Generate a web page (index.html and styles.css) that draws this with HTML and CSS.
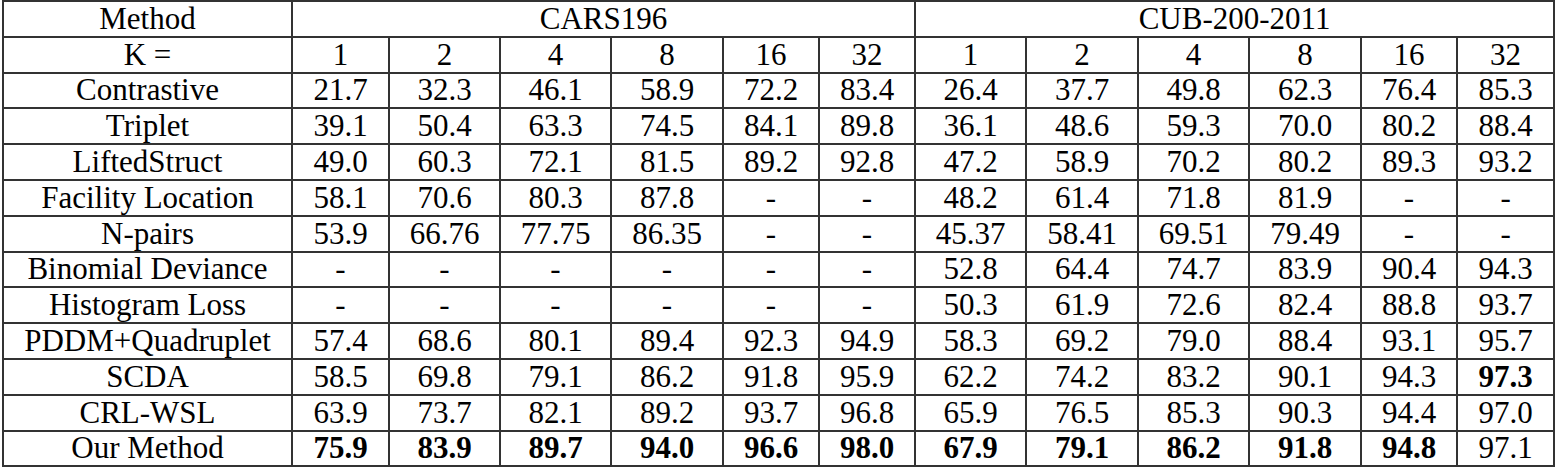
FILE: index.html
```html
<!DOCTYPE html>
<html lang="en">
<head>
    <meta charset="UTF-8">
    <title>Recall@K comparison</title>
    <link rel="stylesheet" href="styles.css">
</head>
<body>
    <table class="results">
        <colgroup>
            <col class="c-method">
            <col class="c-narrow"><col class="c-wide"><col class="c-wide"><col class="c-wider"><col class="c-small"><col class="c-small">
            <col class="c-wide"><col class="c-wider"><col class="c-wide"><col class="c-wider"><col class="c-small"><col class="c-narrow">
        </colgroup>
        <tr>
            <td>Method</td>
            <td colspan="6">CARS196</td>
            <td colspan="6">CUB-200-2011</td>
        </tr>
        <tr>
            <td>K =</td>
            <td>1</td><td>2</td><td>4</td><td>8</td><td>16</td><td>32</td>
            <td>1</td><td>2</td><td>4</td><td>8</td><td>16</td><td>32</td>
        </tr>
        <tr>
            <td>Contrastive</td>
            <td>21.7</td><td>32.3</td><td>46.1</td><td>58.9</td><td>72.2</td><td>83.4</td>
            <td>26.4</td><td>37.7</td><td>49.8</td><td>62.3</td><td>76.4</td><td>85.3</td>
        </tr>
        <tr>
            <td>Triplet</td>
            <td>39.1</td><td>50.4</td><td>63.3</td><td>74.5</td><td>84.1</td><td>89.8</td>
            <td>36.1</td><td>48.6</td><td>59.3</td><td>70.0</td><td>80.2</td><td>88.4</td>
        </tr>
        <tr>
            <td>LiftedStruct</td>
            <td>49.0</td><td>60.3</td><td>72.1</td><td>81.5</td><td>89.2</td><td>92.8</td>
            <td>47.2</td><td>58.9</td><td>70.2</td><td>80.2</td><td>89.3</td><td>93.2</td>
        </tr>
        <tr>
            <td>Facility Location</td>
            <td>58.1</td><td>70.6</td><td>80.3</td><td>87.8</td><td>-</td><td>-</td>
            <td>48.2</td><td>61.4</td><td>71.8</td><td>81.9</td><td>-</td><td>-</td>
        </tr>
        <tr>
            <td>N-pairs</td>
            <td>53.9</td><td>66.76</td><td>77.75</td><td>86.35</td><td>-</td><td>-</td>
            <td>45.37</td><td>58.41</td><td>69.51</td><td>79.49</td><td>-</td><td>-</td>
        </tr>
        <tr>
            <td>Binomial Deviance</td>
            <td>-</td><td>-</td><td>-</td><td>-</td><td>-</td><td>-</td>
            <td>52.8</td><td>64.4</td><td>74.7</td><td>83.9</td><td>90.4</td><td>94.3</td>
        </tr>
        <tr>
            <td>Histogram Loss</td>
            <td>-</td><td>-</td><td>-</td><td>-</td><td>-</td><td>-</td>
            <td>50.3</td><td>61.9</td><td>72.6</td><td>82.4</td><td>88.8</td><td>93.7</td>
        </tr>
        <tr>
            <td>PDDM+Quadruplet</td>
            <td>57.4</td><td>68.6</td><td>80.1</td><td>89.4</td><td>92.3</td><td>94.9</td>
            <td>58.3</td><td>69.2</td><td>79.0</td><td>88.4</td><td>93.1</td><td>95.7</td>
        </tr>
        <tr>
            <td>SCDA</td>
            <td>58.5</td><td>69.8</td><td>79.1</td><td>86.2</td><td>91.8</td><td>95.9</td>
            <td>62.2</td><td>74.2</td><td>83.2</td><td>90.1</td><td>94.3</td><td class="best">97.3</td>
        </tr>
        <tr>
            <td>CRL-WSL</td>
            <td>63.9</td><td>73.7</td><td>82.1</td><td>89.2</td><td>93.7</td><td>96.8</td>
            <td>65.9</td><td>76.5</td><td>85.3</td><td>90.3</td><td>94.4</td><td>97.0</td>
        </tr>
        <tr>
            <td>Our Method</td>
            <td class="best">75.9</td><td class="best">83.9</td><td class="best">89.7</td><td class="best">94.0</td><td class="best">96.6</td><td class="best">98.0</td>
            <td class="best">67.9</td><td class="best">79.1</td><td class="best">86.2</td><td class="best">91.8</td><td class="best">94.8</td><td>97.1</td>
        </tr>
    </table>
</body>
</html>
```

FILE: styles.css
```css
body {
    margin: 0;
    padding: 0 0 0 2px;
    background-color: #fff;
    font-family: "Liberation Serif", "Times New Roman", serif;
    color: #000;
}
.results {
    border-collapse: collapse;
    table-layout: fixed;
    width: 1553px;
    font-size: 31px;
}
.results td {
    border: 2px solid #333;
    height: 33.8px;
    padding: 0;
    text-align: center;
    vertical-align: middle;
    line-height: 30px;
    white-space: nowrap;
}
.c-method { width: 289px; }
.c-narrow { width: 97px; }
.c-small { width: 96px; }
.c-wide { width: 111px; }
.c-wider { width: 112px; }
.best {
    font-weight: bold;
}
```
